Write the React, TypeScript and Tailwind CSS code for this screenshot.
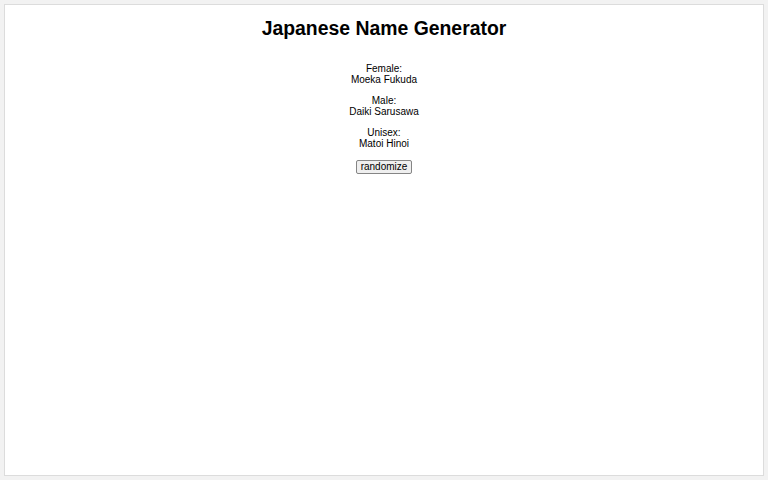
import React, { useState } from "react";

export default function App() {
  const [names] = useState({ female: "Moeka Fukuda", male: "Daiki Sarusawa", unisex: "Matoi Hinoi" });
  return (
    <div className="w-[768px] h-[480px] bg-[#f2f2f2] p-[4px]" style={{ fontFamily: '"Liberation Sans", Arial, sans-serif' }}>
      <div className="h-[472px] bg-white border border-[#dcdcdc] flex flex-col items-center text-black">
        <h1 className="mt-[12px] text-[19.4px] leading-[23px] font-bold">Japanese Name Generator</h1>
        <div className="mt-[23px] flex flex-col items-center text-[10px] leading-[11px] gap-[10px]">
          <div className="flex flex-col items-center">
            <span>Female:</span>
            <span>{names.female}</span>
          </div>
          <div className="flex flex-col items-center">
            <span>Male:</span>
            <span>{names.male}</span>
          </div>
          <div className="flex flex-col items-center">
            <span>Unisex:</span>
            <span>{names.unisex}</span>
          </div>
          <button className="mt-[1px] px-[4px] h-[14px] text-[10px] leading-[10px] border border-[#858585] bg-[#efefef] rounded-[2px]">
            randomize
          </button>
        </div>
      </div>
    </div>
  );
}
